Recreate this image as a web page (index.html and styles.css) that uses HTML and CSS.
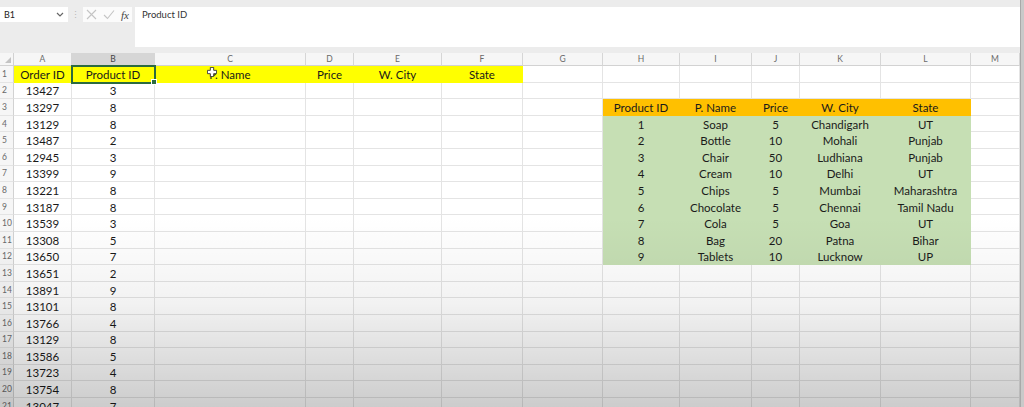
FILE: index.html
```html
<!DOCTYPE html>
<html lang="en">
  <head>
    <title>Product lookup sheet</title>
    <meta charset="UTF-8" />
    <meta name="viewport" content="width=device-width, initial-scale=1" />
    <link rel="stylesheet" href="styles.css">
  </head>

  <body>
    <div class="window">
      <header class="formula-bar">
        <div class="name-box">
          <span>B1</span>
          <svg class="chevron" width="8" height="5" viewBox="0 0 8 5">
            <path d="M1 1 L4 4 L7 1" fill="none" stroke="#666" stroke-width="1.2" />
          </svg>
        </div>
        <span class="grip">⋮</span>
        <div class="fx-buttons">
          <svg width="11" height="11" viewBox="0 0 11 11">
            <path d="M1 1 L10 10 M10 1 L1 10" stroke="#c4c4c4" stroke-width="1.1" />
          </svg>
          <svg width="12" height="11" viewBox="0 0 12 11">
            <path d="M1 6 L4.5 9.5 L11 1.5" fill="none" stroke="#c4c4c4" stroke-width="1.1" />
          </svg>
          <span class="fx">fx</span>
        </div>
        <div class="formula-input">Product ID</div>
      </header>

      <div class="sheet">
        <div class="row">
          <div class="corner"></div><div class="col">A</div><div class="col selected">B</div><div class="col">C</div><div class="col">D</div><div class="col">E</div><div class="col">F</div><div class="col">G</div><div class="col">H</div><div class="col">I</div><div class="col">J</div><div class="col">K</div><div class="col">L</div><div class="col">M</div>
        </div>
        <div class="row">
          <div class="rh">1</div><div class="c yel">Order ID</div><div class="c yel active">Product ID</div>
          <div class="c yel">
            P. Name
            <svg class="cursor" width="10" height="10" viewBox="0 0 12 12">
              <path d="M4 0.5 H8 V4 H11.5 V8 H8 V11.5 H4 V8 H0.5 V4 H4 Z" fill="#fff" stroke="#333" stroke-width="1.1" />
            </svg>
          </div>
          <div class="c yel">Price</div><div class="c yel">W. City</div><div class="c yel">State</div>
          <div class="c"></div><div class="c"></div><div class="c"></div><div class="c"></div><div class="c"></div><div class="c"></div><div class="c"></div>
        </div>
        <div class="row">
          <div class="rh">2</div><div class="c">13427</div><div class="c">3</div>
          <div class="c"></div><div class="c"></div><div class="c"></div><div class="c"></div><div class="c"></div>
          <div class="c"></div><div class="c"></div><div class="c"></div><div class="c"></div><div class="c"></div><div class="c"></div>
        </div>
        <div class="row">
          <div class="rh">3</div><div class="c">13297</div><div class="c">8</div>
          <div class="c"></div><div class="c"></div><div class="c"></div><div class="c"></div><div class="c"></div>
          <div class="c org">Product ID</div><div class="c org">P. Name</div><div class="c org">Price</div><div class="c org">W. City</div><div class="c org">State</div><div class="c"></div>
        </div>
        <div class="row">
          <div class="rh">4</div><div class="c">13129</div><div class="c">8</div>
          <div class="c"></div><div class="c"></div><div class="c"></div><div class="c"></div><div class="c"></div>
          <div class="c grn">1</div><div class="c grn">Soap</div><div class="c grn">5</div><div class="c grn">Chandigarh</div><div class="c grn">UT</div><div class="c"></div>
        </div>
        <div class="row">
          <div class="rh">5</div><div class="c">13487</div><div class="c">2</div>
          <div class="c"></div><div class="c"></div><div class="c"></div><div class="c"></div><div class="c"></div>
          <div class="c grn">2</div><div class="c grn">Bottle</div><div class="c grn">10</div><div class="c grn">Mohali</div><div class="c grn">Punjab</div><div class="c"></div>
        </div>
        <div class="row">
          <div class="rh">6</div><div class="c">12945</div><div class="c">3</div>
          <div class="c"></div><div class="c"></div><div class="c"></div><div class="c"></div><div class="c"></div>
          <div class="c grn">3</div><div class="c grn">Chair</div><div class="c grn">50</div><div class="c grn">Ludhiana</div><div class="c grn">Punjab</div><div class="c"></div>
        </div>
        <div class="row">
          <div class="rh">7</div><div class="c">13399</div><div class="c">9</div>
          <div class="c"></div><div class="c"></div><div class="c"></div><div class="c"></div><div class="c"></div>
          <div class="c grn">4</div><div class="c grn">Cream</div><div class="c grn">10</div><div class="c grn">Delhi</div><div class="c grn">UT</div><div class="c"></div>
        </div>
        <div class="row">
          <div class="rh">8</div><div class="c">13221</div><div class="c">8</div>
          <div class="c"></div><div class="c"></div><div class="c"></div><div class="c"></div><div class="c"></div>
          <div class="c grn">5</div><div class="c grn">Chips</div><div class="c grn">5</div><div class="c grn">Mumbai</div><div class="c grn">Maharashtra</div><div class="c"></div>
        </div>
        <div class="row">
          <div class="rh">9</div><div class="c">13187</div><div class="c">8</div>
          <div class="c"></div><div class="c"></div><div class="c"></div><div class="c"></div><div class="c"></div>
          <div class="c grn">6</div><div class="c grn">Chocolate</div><div class="c grn">5</div><div class="c grn">Chennai</div><div class="c grn">Tamil Nadu</div><div class="c"></div>
        </div>
        <div class="row">
          <div class="rh">10</div><div class="c">13539</div><div class="c">3</div>
          <div class="c"></div><div class="c"></div><div class="c"></div><div class="c"></div><div class="c"></div>
          <div class="c grn">7</div><div class="c grn">Cola</div><div class="c grn">5</div><div class="c grn">Goa</div><div class="c grn">UT</div><div class="c"></div>
        </div>
        <div class="row">
          <div class="rh">11</div><div class="c">13308</div><div class="c">5</div>
          <div class="c"></div><div class="c"></div><div class="c"></div><div class="c"></div><div class="c"></div>
          <div class="c grn">8</div><div class="c grn">Bag</div><div class="c grn">20</div><div class="c grn">Patna</div><div class="c grn">Bihar</div><div class="c"></div>
        </div>
        <div class="row">
          <div class="rh">12</div><div class="c">13650</div><div class="c">7</div>
          <div class="c"></div><div class="c"></div><div class="c"></div><div class="c"></div><div class="c"></div>
          <div class="c grn">9</div><div class="c grn">Tablets</div><div class="c grn">10</div><div class="c grn">Lucknow</div><div class="c grn">UP</div><div class="c"></div>
        </div>
        <div class="row">
          <div class="rh">13</div><div class="c">13651</div><div class="c">2</div>
          <div class="c"></div><div class="c"></div><div class="c"></div><div class="c"></div><div class="c"></div>
          <div class="c"></div><div class="c"></div><div class="c"></div><div class="c"></div><div class="c"></div><div class="c"></div>
        </div>
        <div class="row">
          <div class="rh">14</div><div class="c">13891</div><div class="c">9</div>
          <div class="c"></div><div class="c"></div><div class="c"></div><div class="c"></div><div class="c"></div>
          <div class="c"></div><div class="c"></div><div class="c"></div><div class="c"></div><div class="c"></div><div class="c"></div>
        </div>
        <div class="row">
          <div class="rh">15</div><div class="c">13101</div><div class="c">8</div>
          <div class="c"></div><div class="c"></div><div class="c"></div><div class="c"></div><div class="c"></div>
          <div class="c"></div><div class="c"></div><div class="c"></div><div class="c"></div><div class="c"></div><div class="c"></div>
        </div>
        <div class="row">
          <div class="rh">16</div><div class="c">13766</div><div class="c">4</div>
          <div class="c"></div><div class="c"></div><div class="c"></div><div class="c"></div><div class="c"></div>
          <div class="c"></div><div class="c"></div><div class="c"></div><div class="c"></div><div class="c"></div><div class="c"></div>
        </div>
        <div class="row">
          <div class="rh">17</div><div class="c">13129</div><div class="c">8</div>
          <div class="c"></div><div class="c"></div><div class="c"></div><div class="c"></div><div class="c"></div>
          <div class="c"></div><div class="c"></div><div class="c"></div><div class="c"></div><div class="c"></div><div class="c"></div>
        </div>
        <div class="row">
          <div class="rh">18</div><div class="c">13586</div><div class="c">5</div>
          <div class="c"></div><div class="c"></div><div class="c"></div><div class="c"></div><div class="c"></div>
          <div class="c"></div><div class="c"></div><div class="c"></div><div class="c"></div><div class="c"></div><div class="c"></div>
        </div>
        <div class="row">
          <div class="rh">19</div><div class="c">13723</div><div class="c">4</div>
          <div class="c"></div><div class="c"></div><div class="c"></div><div class="c"></div><div class="c"></div>
          <div class="c"></div><div class="c"></div><div class="c"></div><div class="c"></div><div class="c"></div><div class="c"></div>
        </div>
        <div class="row">
          <div class="rh">20</div><div class="c">13754</div><div class="c">8</div>
          <div class="c"></div><div class="c"></div><div class="c"></div><div class="c"></div><div class="c"></div>
          <div class="c"></div><div class="c"></div><div class="c"></div><div class="c"></div><div class="c"></div><div class="c"></div>
        </div>
        <div class="row">
          <div class="rh">21</div><div class="c">13047</div><div class="c">7</div>
          <div class="c"></div><div class="c"></div><div class="c"></div><div class="c"></div><div class="c"></div>
          <div class="c"></div><div class="c"></div><div class="c"></div><div class="c"></div><div class="c"></div><div class="c"></div>
        </div>
      </div>

      <div class="shade"></div>
    </div>
  </body>
</html>
```

FILE: styles.css
```css
body {
  margin: 0;
  background: #c9c9c9;
  font-family: Lato, "Liberation Sans", sans-serif;
}

.window {
  position: relative;
  width: 1020px;
  height: 407px;
  overflow: hidden;
  background: #ececec;
  border-right: 1px solid #a9a9a9;
}

/* formula bar */

.formula-bar {
  display: flex;
  align-items: flex-start;
  height: 40px;
  padding-top: 7px;
  margin-bottom: 6px;
}

.name-box {
  display: flex;
  align-items: center;
  justify-content: space-between;
  box-sizing: border-box;
  width: 68px;
  height: 15px;
  padding: 0 4px 0 4px;
  background: #fff;
  font-size: 9px;
  color: #222;
}

.grip {
  width: 15px;
  text-align: center;
  font-size: 9px;
  line-height: 15px;
  color: #b8b8b8;
}

.fx-buttons {
  display: flex;
  align-items: center;
  gap: 6px;
  box-sizing: border-box;
  width: 49px;
  height: 15px;
  padding-left: 3px;
  background: #fbfbfb;
}

.fx {
  font-family: "Liberation Serif", serif;
  font-style: italic;
  font-size: 11px;
  color: #444;
}

.formula-input {
  flex: 1;
  height: 40px;
  margin-left: 3px;
  padding: 2px 7px;
  box-sizing: border-box;
  background: #fff;
  font-size: 9.5px;
  color: #333;
}

/* grid */

.sheet {
  display: grid;
  grid-template-columns: 14px 58px 83px 151px 48px 88px 81px 80px 77px 72px 48px 81px 90px 49px;
  grid-template-rows: 13px;
  grid-auto-rows: 16.6px;
  background: #fff;
}

.row {
  display: contents;
}

.corner,
.col,
.rh {
  box-sizing: border-box;
  background: #f6f6f6;
  color: #6a6a6a;
  font-size: 8.5px;
}

.corner {
  position: relative;
  border-right: 1px solid #d2d2d2;
  border-bottom: 1px solid #d2d2d2;
}

.corner::after {
  content: "";
  position: absolute;
  right: 2px;
  bottom: 2px;
  border-left: 6px solid transparent;
  border-bottom: 6px solid #c3c3c3;
}

.col {
  display: flex;
  align-items: center;
  justify-content: center;
  border-right: 1px solid #d6d6d6;
  border-bottom: 1px solid #d2d2d2;
}

.col.selected {
  background: #d6d6d6;
  color: #444;
}

.rh {
  display: flex;
  align-items: center;
  padding-left: 2px;
  border-right: 1px solid #d2d2d2;
  border-bottom: 1px solid #e4e4e4;
}

.c {
  display: flex;
  align-items: center;
  justify-content: center;
  box-sizing: border-box;
  border-right: 1px solid #e4e4e4;
  border-bottom: 1px solid #e4e4e4;
  padding-top: 1px;
  font-size: 11.5px;
  color: #1a1a1a;
  white-space: nowrap;
  overflow: hidden;
}

.c.yel {
  background: #ffff00;
  border-color: #ffff00;
}

.c.org {
  background: #ffc000;
  border-color: #ffc000;
}

.c.grn {
  background: #c6dfb4;
  border-color: #c6dfb4;
}

.c.active {
  position: relative;
  overflow: visible;
  outline: 2px solid #2b6a40;
  outline-offset: -1px;
  z-index: 1;
}

.c.active::after {
  content: "";
  position: absolute;
  right: -3px;
  bottom: -3px;
  width: 4px;
  height: 4px;
  background: #2b6a40;
  border: 1px solid #fff;
}

.c .cursor {
  position: absolute;
  margin-left: -36px;
  margin-top: -4px;
}

.shade {
  position: absolute;
  left: 0;
  right: 0;
  bottom: 0;
  height: 190px;
  background: linear-gradient(to bottom, rgba(0, 0, 0, 0), rgba(0, 0, 0, 0.05) 45%, rgba(0, 0, 0, 0.2));
  pointer-events: none;
}
```
